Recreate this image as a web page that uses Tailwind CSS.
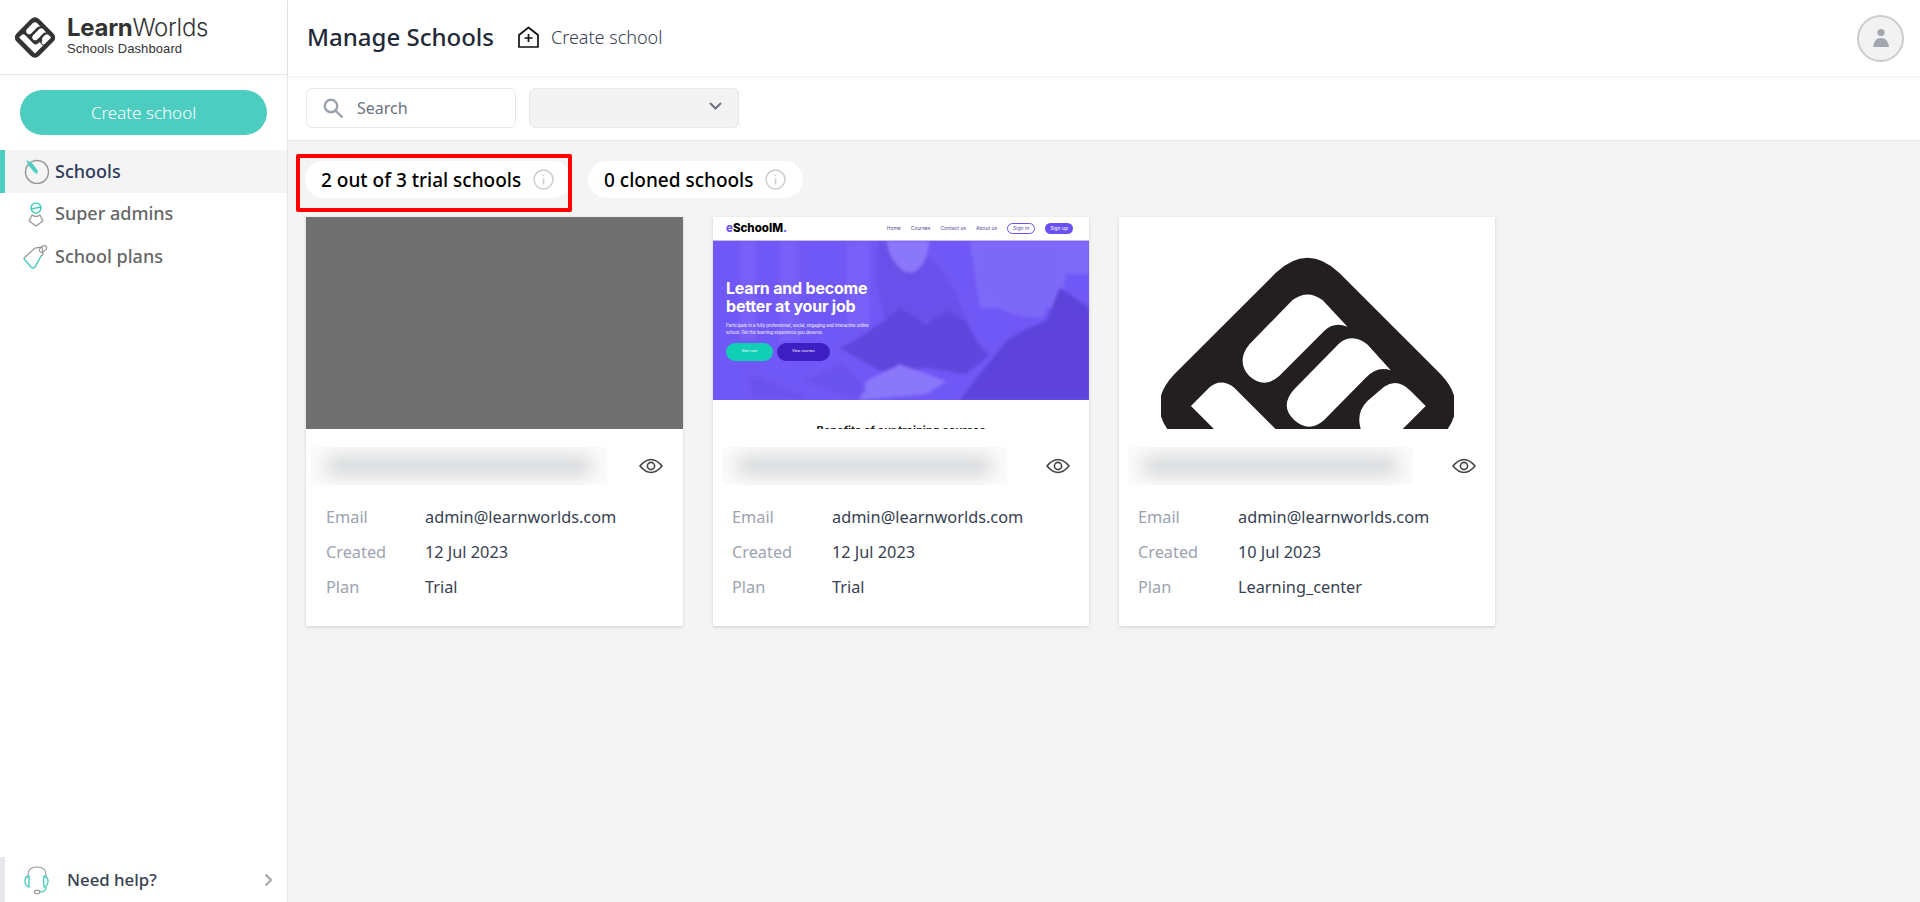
<!DOCTYPE html>
<html lang="en">
<head>
    <meta charset="UTF-8">
    <script src="https://cdn.jsdelivr.net/npm/@tailwindcss/browser@4"></script>
    <title>Manage Schools</title>
</head>
<body class="bg-[#f4f4f4] font-['Noto_Sans',sans-serif]">
    <svg class="hidden">
        <symbol id="lw-logo" viewBox="150 140 880 900">
            <path fill-rule="evenodd" d="M495 190 Q590 100 685 190 L990 495 Q1080 590 990 685 L685 990 Q590 1080 495 990 L190 685 Q100 590 190 495 Z
                M415 405 L545 272 Q590 238 635 272 L710 352 Q670 335 640 365 L505 500 Q460 540 415 500 Q375 455 415 405 Z
                M550 540 L685 402 Q725 370 770 405 L840 483 Q800 468 765 505 L640 632 Q595 672 550 632 Q505 590 550 540 Z
                M770 575 L820 532 Q860 505 900 545 L945 590 L810 725 Q770 760 740 720 Q725 690 750 660 Q735 610 770 575 Z
                M240 590 L296 534 Q330 505 370 535 L560 725 Q600 760 650 725 L690 690 Q710 720 740 750 Q775 780 790 745 L590 940 Z"/>
        </symbol>
    </svg>

    <div class="flex h-[902px] w-[1920px] overflow-hidden">
        <!--Sidebar-->
        <aside class="flex w-[288px] shrink-0 flex-col border-r border-[#e5e7eb] bg-white">
            <div class="flex h-[75px] items-center gap-[12px] border-b border-[#e5e7eb] pl-[15px]">
                <svg class="h-[41px] w-[40px] fill-[#333333]"><use href="#lw-logo"/></svg>
                <div class="mb-[4px] font-['Inter',sans-serif] text-[#333333]">
                    <div class="text-[24px] leading-[28px] tracking-[-0.3px]"><span class="font-bold">Learn</span><span class="font-light">Worlds</span></div>
                    <div class="font-['Liberation_Sans',sans-serif] text-[13px] leading-[14px] tracking-[0.1px]">Schools Dashboard</div>
                </div>
            </div>
            <div class="px-[20px] pt-[15px]">
                <button class="h-[45px] w-[247px] rounded-full bg-[#4dcdc0] pt-[1px] text-[17px] font-light text-white">Create school</button>
            </div>
            <nav class="mt-[15px] text-[18px] font-medium text-[#666666]">
                <a class="flex h-[43px] items-center gap-[6px] border-l-[5px] border-[#4dcdc0] bg-[#f4f4f4] pb-[1px] pl-[18px] text-[#2d3a5a]">
                    <svg class="h-[26px] w-[26px]" viewBox="0 0 26 26" fill="none">
                        <circle cx="14" cy="14" r="11.5" stroke="#999999" stroke-width="1.5"/>
                        <path d="M3 2 L9 5 L15 13 L14 16 L11 14 L6 8 Z" fill="#4dcdc0"/>
                    </svg>
                    Schools
                </a>
                <a class="flex h-[43px] items-center gap-[6px] pb-[2px] pl-[23px]">
                    <svg class="h-[26px] w-[26px]" viewBox="0 0 26 26" fill="none">
                        <circle cx="13" cy="7" r="5" stroke="#4dcdc0" stroke-width="1.6"/>
                        <path d="M8 8 L18 6" stroke="#4dcdc0" stroke-width="1.6"/>
                        <path d="M9 14 L6 20 L13 25 L20 20 L17 14 Q13 17 9 14 Z" stroke="#999999" stroke-width="1.3" stroke-linejoin="round"/>
                    </svg>
                    Super admins
                </a>
                <a class="flex h-[43px] items-center gap-[6px] pb-[2px] pl-[23px]">
                    <svg class="h-[26px] w-[26px]" viewBox="0 0 26 26" fill="none">
                        <path d="M1 14 L12 4 L19 3" stroke="#999999" stroke-width="1.3"/>
                        <path d="M19 3 L20 10 L18 12" stroke="#999999" stroke-width="1.3"/>
                        <path d="M1 14 Q1 15 2 16 L8 23 Q10 25 12 23 L18 12" stroke="#4dcdc0" stroke-width="1.5"/>
                        <ellipse cx="20" cy="5" rx="4" ry="2.5" transform="rotate(-35 20 5)" stroke="#999999" stroke-width="1.2"/>
                    </svg>
                    School plans
                </a>
            </nav>
            <div class="mt-auto flex h-[45px] items-center border-l-[5px] border-[#e5e7eb] pl-[19px] pr-[14px] text-[16.8px] font-medium text-[#374151]">
                <svg class="mr-[17px] h-[30px] w-[26px]" viewBox="0 0 26 30" fill="none">
                    <path d="M4 13 V10 Q4 2 13 2 Q22 2 22 10 V13" stroke="#999999" stroke-width="1.2"/>
                    <path d="M4 11 Q1 12 1 16 Q1 21 5 22 L5 11 Z M20 11 Q24 12 24 16 Q24 21 20 22 Q19 16 20 11 Z" stroke="#4dcdc0" stroke-width="1.4"/>
                    <path d="M22 22 Q22 27 16 27" stroke="#4dcdc0" stroke-width="1.4"/>
                    <ellipse cx="13" cy="27" rx="2.6" ry="1.8" stroke="#999999" stroke-width="1.2"/>
                </svg>
                Need help?
                <svg class="ml-auto h-[14px] w-[9px]" viewBox="0 0 9 14" fill="none"><path d="M1.5 1.5 L7 7 L1.5 12.5" stroke="#a8a8a8" stroke-width="2.2"/></svg>
            </div>
        </aside>

        <!--Main-->
        <main class="flex min-w-0 flex-1 flex-col">
            <header class="relative flex h-[76px] shrink-0 items-center gap-[24px] bg-white pl-[19px] pr-[16px] shadow-[0_1px_3px_rgba(0,0,0,0.08)]">
                <h1 class="mb-[2px] text-[24px] font-medium text-[#1f2937]">Manage Schools</h1>
                <a class="mb-[2px] flex items-center gap-[12px] text-[18px] font-light text-[#374151]">
                    <svg class="h-[22px] w-[21px]" viewBox="0 0 21 22" fill="none" stroke="#111111" stroke-width="1.7">
                        <path d="M1 21 V9 L10.5 1.5 L20 9 V21 Z" stroke-linejoin="round"/>
                        <path d="M10.5 8 V16 M6.5 12 H14.5"/>
                    </svg>
                    Create school
                </a>
                <div class="ml-auto flex h-[47px] w-[47px] items-center justify-center rounded-full border-2 border-[#cccccc] bg-[#f2f2f2]">
                    <svg class="h-[20px] w-[18px]" viewBox="0 0 18 20" fill="#a3a8b0">
                        <circle cx="9" cy="4.5" r="3.6"/>
                        <path d="M1 19 Q2 10 9 10 Q16 10 17 19 Z"/>
                    </svg>
                </div>
            </header>

            <div class="flex h-[65px] shrink-0 items-center gap-[13px] border-b border-[#e5e7eb] bg-white pl-[18px]">
                <div class="flex h-[40px] w-[210px] items-center gap-[13px] rounded-md border border-[#e5e7eb] bg-white pl-[16px]">
                    <svg class="h-[21px] w-[21px]" viewBox="0 0 21 21" fill="none" stroke="#9ca3af" stroke-width="2.4">
                        <circle cx="8" cy="8" r="6.2"/>
                        <path d="M12.6 12.6 L19.5 19.5"/>
                    </svg>
                    <span class="text-[16px] text-[#6b7280]">Search</span>
                </div>
                <div class="flex h-[40px] w-[210px] items-center justify-end rounded-md border border-[#e5e7eb] bg-[#f3f3f3] pr-[16px]">
                    <svg class="mb-[4px] h-[8px] w-[13px]" viewBox="0 0 13 8" fill="none"><path d="M1 1 L6.5 6.5 L12 1" stroke="#6b7280" stroke-width="2"/></svg>
                </div>
            </div>

            <div class="flex-1 pl-[17px]">
                <!--Counters-->
                <div class="mt-[20px] flex gap-[17px] text-[19px] font-medium text-black">
                    <div class="relative flex h-[37px] w-[266px] items-center gap-[12px] rounded-full bg-white pl-[16px]">
                        <span class="pt-[1px]">2 out of 3 trial schools</span>
                        <svg class="h-[21px] w-[21px]" viewBox="0 0 20 20" fill="none" stroke="#cccccc" stroke-width="1.4">
                            <circle cx="10" cy="10" r="9"/><path d="M10 9 V15 M10 5.5 V7"/>
                        </svg>
                        <div class="absolute left-[-9px] top-[-7px] h-[58px] w-[276px] rounded-[2px] border-[4px] border-[#ff0000]"></div>
                    </div>
                    <div class="flex h-[37px] w-[215px] items-center gap-[12px] rounded-full bg-white pl-[16px]">
                        <span class="pt-[1px]">0 cloned schools</span>
                        <svg class="h-[21px] w-[21px]" viewBox="0 0 20 20" fill="none" stroke="#cccccc" stroke-width="1.4">
                            <circle cx="10" cy="10" r="9"/><path d="M10 9 V15 M10 5.5 V7"/>
                        </svg>
                    </div>
                </div>

                <!--School cards-->
                <div class="mt-[19px] flex gap-[30px] pl-[1px] text-[16.3px]">
                    <div class="h-[409px] w-[377px] bg-white shadow-[0_1px_3px_rgba(0,0,0,0.15)]">
                        <div class="h-[212px] bg-[#707070]"></div>
                        <div class="mt-[18px] flex items-center pl-[5px] pr-[20px]">
                            <div class="flex h-[38px] w-[296px] items-center overflow-hidden bg-[#fbfbfb]">
                                <div class="mx-[14px] h-[18px] flex-1 rounded-full bg-[#d2d4d6] blur-[9px]"></div>
                            </div>
                            <svg class="ml-auto h-[16px] w-[24px]" viewBox="0 0 24 16" fill="none" stroke="#444444" stroke-width="1.6">
                                <path d="M1 8 Q12 -5 23 8 Q12 21 1 8 Z"/><circle cx="12" cy="8" r="3.6"/>
                            </svg>
                        </div>
                        <dl class="mt-[15px] pl-[20px] leading-[35px]">
                            <div class="flex"><dt class="w-[99px] text-[#9ca3af]">Email</dt><dd class="text-[#374151]">admin@learnworlds.com</dd></div>
                            <div class="flex"><dt class="w-[99px] text-[#9ca3af]">Created</dt><dd class="text-[#374151]">12 Jul 2023</dd></div>
                            <div class="flex"><dt class="w-[99px] text-[#9ca3af]">Plan</dt><dd class="text-[#374151]">Trial</dd></div>
                        </dl>
                    </div>

                    <div class="h-[409px] w-[376px] bg-white shadow-[0_1px_3px_rgba(0,0,0,0.15)]">
                        <div class="h-[212px] overflow-hidden">
                            <div class="flex h-[24px] items-center border-b border-[#c4b9fa] pl-[13px] pr-[16px] font-['Inter',sans-serif] text-[5px] text-[#5a4a9a]">
                                <span class="text-[11.5px] font-extrabold text-black"><span class="text-[#6a50f0]">e</span>SchoolM<span class="text-[#6a50f0]">.</span></span>
                                <span class="ml-auto">Home</span>
                                <span class="ml-[10px]">Courses</span>
                                <span class="ml-[10px]">Contact us</span>
                                <span class="ml-[10px]">About us</span>
                                <span class="ml-[10px] rounded-full border border-[#6a50f0] px-[5px] py-[1px]">Sign in</span>
                                <span class="ml-[10px] rounded-full bg-[#6a50f0] px-[5px] py-[2px] text-white">Sign up</span>
                            </div>
                            <div class="relative h-[159px] overflow-hidden bg-[#7058f6] font-['Inter',sans-serif]">
                                <!--hero photo-->
                                <svg class="absolute inset-0 h-full w-full blur-[1.5px]" viewBox="0 0 1128 477">
                                    <path d="M80 0 H130 V300 H80 Z M200 0 H260 V300 H200 Z M400 0 H470 V260 H400 Z" fill="#775ff7"/>
                                    <path d="M770 0 H1128 V100 H1060 L1040 200 H800 Z" fill="#7e69f8"/>
                                    <path d="M500 0 Q470 100 520 240 L760 240 Q720 110 640 40 L650 0 Z" fill="#6a50ea"/>
                                    <path d="M520 0 H650 L640 50 Q610 110 570 90 Q530 60 520 0 Z" fill="#8a77f9"/>
                                    <path d="M480 260 Q530 230 560 200 L640 250 L700 210 L760 240 Q800 330 830 340 L760 400 L640 380 L500 390 L380 320 Q430 300 480 260 Z" fill="#5f46dc"/>
                                    <path d="M460 420 L560 370 L700 420 L640 460 L440 477 Z" fill="#8a77f9"/>
                                    <path d="M740 477 Q800 400 880 300 Q940 260 1000 240 L1040 140 L1128 200 V477 Z" fill="#5d43da"/>
                                    <path d="M800 0 H1040 L1030 120 L990 230 Q900 230 860 200 L800 130 Z" fill="#7d68f8"/>
                                    <path d="M110 400 L280 470 H120 Z M270 420 L390 370 L460 450 L420 470 Z" fill="#6a52ee"/>
                                </svg>
                                <div class="relative pl-[13px] pt-[38px] text-white">
                                    <div class="text-[16px] font-bold leading-[18px] tracking-[-0.2px]">Learn and become<br>better at your job</div>
                                    <p class="mt-[7px] w-[150px] text-[4.2px] leading-[7px]">Participate in a fully professional, social, engaging and interactive online school. Get the learning experience you deserve.</p>
                                    <div class="mt-[7px] flex gap-[4px] text-[3.5px]">
                                        <span class="flex h-[18px] w-[47px] items-center justify-center rounded-full bg-[#10cfb5]">Start now</span>
                                        <span class="flex h-[18px] w-[53px] items-center justify-center rounded-full bg-[#3d1fc4]">View courses</span>
                                    </div>
                                </div>
                            </div>
                            <div class="pt-[23px] text-center font-['Inter',sans-serif] text-[11px] font-bold leading-[14px] text-[#222222]">Benefits of our training courses</div>
                        </div>
                        <div class="mt-[18px] flex items-center pl-[9px] pr-[19px]">
                            <div class="flex h-[38px] w-[285px] items-center overflow-hidden bg-[#fbfbfb]">
                                <div class="mx-[14px] h-[18px] flex-1 rounded-full bg-[#d2d4d6] blur-[9px]"></div>
                            </div>
                            <svg class="ml-auto h-[16px] w-[24px]" viewBox="0 0 24 16" fill="none" stroke="#444444" stroke-width="1.6">
                                <path d="M1 8 Q12 -5 23 8 Q12 21 1 8 Z"/><circle cx="12" cy="8" r="3.6"/>
                            </svg>
                        </div>
                        <dl class="mt-[15px] pl-[19px] leading-[35px]">
                            <div class="flex"><dt class="w-[100px] text-[#9ca3af]">Email</dt><dd class="text-[#374151]">admin@learnworlds.com</dd></div>
                            <div class="flex"><dt class="w-[100px] text-[#9ca3af]">Created</dt><dd class="text-[#374151]">12 Jul 2023</dd></div>
                            <div class="flex"><dt class="w-[100px] text-[#9ca3af]">Plan</dt><dd class="text-[#374151]">Trial</dd></div>
                        </dl>
                    </div>

                    <div class="h-[409px] w-[376px] bg-white shadow-[0_1px_3px_rgba(0,0,0,0.15)]">
                        <div class="h-[212px] overflow-hidden pt-[39px]">
                            <svg class="mx-auto h-[300px] w-[293px] fill-[#231f20]"><use href="#lw-logo"/></svg>
                        </div>
                        <div class="mt-[18px] flex items-center pl-[9px] pr-[19px]">
                            <div class="flex h-[38px] w-[285px] items-center overflow-hidden bg-[#fbfbfb]">
                                <div class="mx-[14px] h-[18px] flex-1 rounded-full bg-[#d2d4d6] blur-[9px]"></div>
                            </div>
                            <svg class="ml-auto h-[16px] w-[24px]" viewBox="0 0 24 16" fill="none" stroke="#444444" stroke-width="1.6">
                                <path d="M1 8 Q12 -5 23 8 Q12 21 1 8 Z"/><circle cx="12" cy="8" r="3.6"/>
                            </svg>
                        </div>
                        <dl class="mt-[15px] pl-[19px] leading-[35px]">
                            <div class="flex"><dt class="w-[100px] text-[#9ca3af]">Email</dt><dd class="text-[#374151]">admin@learnworlds.com</dd></div>
                            <div class="flex"><dt class="w-[100px] text-[#9ca3af]">Created</dt><dd class="text-[#374151]">10 Jul 2023</dd></div>
                            <div class="flex"><dt class="w-[100px] text-[#9ca3af]">Plan</dt><dd class="text-[#374151]">Learning_center</dd></div>
                        </dl>
                    </div>
                </div>
            </div>
        </main>
    </div>
</body>
</html>
